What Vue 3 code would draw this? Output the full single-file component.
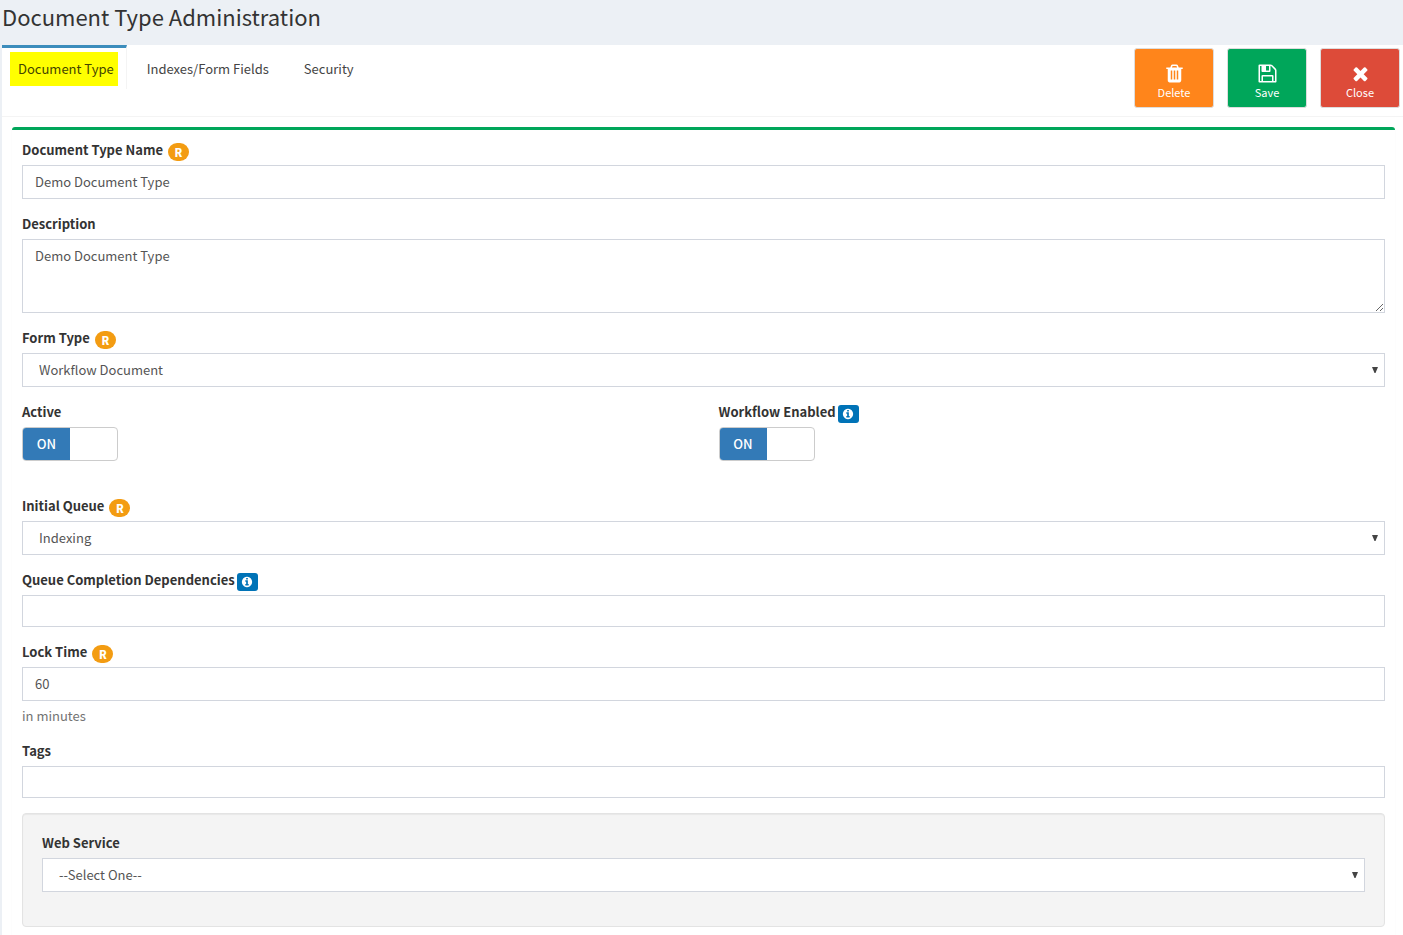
<template>
  <div class="page">
    <header class="page-header">
      <h1 class="page-title">Document Type Administration</h1>
    </header>

    <main class="panel">
      <!-- Tabs and actions -->
      <div class="toolbar">
        <nav>
          <ul class="tabs">
            <li
              v-for="tab in tabs"
              :key="tab"
              class="tab"
              :class="{ active: tab === activeTab }"
            >
              <a href="#" class="tab-link" @click.prevent="activeTab = tab">{{ tab }}</a>
            </li>
          </ul>
        </nav>
        <div class="actions">
          <button
            v-for="action in actions"
            :key="action.label"
            type="button"
            class="btn-action"
            :class="action.type"
          >
            <svg class="btn-icon" viewBox="0 0 1792 1792" aria-hidden="true">
              <path :d="action.icon" />
            </svg>
            <span>{{ action.label }}</span>
          </button>
        </div>
      </div>

      <!-- Form -->
      <form class="box" @submit.prevent>
        <div class="form-group">
          <div class="label-row">
            <label for="name">Document Type Name</label>
            <span class="badge-required">R</span>
          </div>
          <input id="name" v-model="form.name" type="text" class="form-control">
        </div>

        <div class="form-group">
          <div class="label-row">
            <label for="description">Description</label>
          </div>
          <textarea id="description" v-model="form.description" class="form-control textarea"></textarea>
        </div>

        <div class="form-group">
          <div class="label-row">
            <label for="form-type">Form Type</label>
            <span class="badge-required">R</span>
          </div>
          <div class="select-wrap">
            <select id="form-type" v-model="form.formType" class="form-control">
              <option>Workflow Document</option>
            </select>
            <svg class="select-arrow" viewBox="0 0 6 6" aria-hidden="true"><path d="M0 0h6L3.5 6h-1z" /></svg>
          </div>
        </div>

        <div class="form-row">
          <div>
            <div class="label-row">
              <label for="active">Active</label>
            </div>
            <div class="toggle">
              <input id="active" v-model="form.active" type="checkbox" class="toggle-input">
              <span class="toggle-state">{{ form.active ? 'ON' : '' }}</span>
            </div>
          </div>
          <div>
            <div class="label-row">
              <label for="workflow">Workflow Enabled</label>
              <span class="badge-info">
                <svg class="info-icon" viewBox="0 0 1792 1792" aria-hidden="true"><path :d="infoIcon" /></svg>
              </span>
            </div>
            <div class="toggle">
              <input id="workflow" v-model="form.workflow" type="checkbox" class="toggle-input">
              <span class="toggle-state">{{ form.workflow ? 'ON' : '' }}</span>
            </div>
          </div>
        </div>

        <div class="form-group">
          <div class="label-row">
            <label for="queue">Initial Queue</label>
            <span class="badge-required">R</span>
          </div>
          <div class="select-wrap">
            <select id="queue" v-model="form.queue" class="form-control">
              <option>Indexing</option>
            </select>
            <svg class="select-arrow" viewBox="0 0 6 6" aria-hidden="true"><path d="M0 0h6L3.5 6h-1z" /></svg>
          </div>
        </div>

        <div class="form-group">
          <div class="label-row">
            <label for="dependencies">Queue Completion Dependencies</label>
            <span class="badge-info">
              <svg class="info-icon" viewBox="0 0 1792 1792" aria-hidden="true"><path :d="infoIcon" /></svg>
            </span>
          </div>
          <input id="dependencies" v-model="form.dependencies" type="text" class="form-control multi">
        </div>

        <div class="form-group">
          <div class="label-row">
            <label for="lock-time">Lock Time</label>
            <span class="badge-required">R</span>
          </div>
          <input id="lock-time" v-model="form.lockTime" type="text" class="form-control">
          <p class="help-block">in minutes</p>
        </div>

        <div class="form-group">
          <div class="label-row">
            <label for="tags">Tags</label>
          </div>
          <input id="tags" v-model="form.tags" type="text" class="form-control multi">
        </div>

        <div class="well">
          <div class="form-group">
            <div class="label-row">
              <label for="service">Web Service</label>
            </div>
            <div class="select-wrap">
              <select id="service" v-model="form.service" class="form-control">
                <option value="">--Select One--</option>
              </select>
              <svg class="select-arrow" viewBox="0 0 6 6" aria-hidden="true"><path d="M0 0h6L3.5 6h-1z" /></svg>
            </div>
          </div>
        </div>
      </form>
    </main>
  </div>
</template>

<script setup>
import { ref } from 'vue'

const tabs = ['Document Type', 'Indexes/Form Fields', 'Security']
const activeTab = ref('Document Type')

const form = ref({
  name: 'Demo Document Type',
  description: 'Demo Document Type',
  formType: 'Workflow Document',
  active: true,
  workflow: true,
  queue: 'Indexing',
  dependencies: '',
  lockTime: '60',
  tags: '',
  service: ''
})

const actions = [
  {
    label: 'Delete',
    type: 'delete',
    icon: 'M704 1376v-704q0-14-9-23t-23-9h-64q-14 0-23 9t-9 23v704q0 14 9 23t23 9h64q14 0 23-9t9-23zm256 0v-704q0-14-9-23t-23-9h-64q-14 0-23 9t-9 23v704q0 14 9 23t23 9h64q14 0 23-9t9-23zm256 0v-704q0-14-9-23t-23-9h-64q-14 0-23 9t-9 23v704q0 14 9 23t23 9h64q14 0 23-9t9-23zm-544-992h448l-48-117q-7-9-17-11h-317q-10 2-17 11zm928 32v64q0 14-9 23t-23 9h-96v948q0 83-47 143.5t-113 60.5h-832q-66 0-113-58.5t-47-141.5v-952h-96q-14 0-23-9t-9-23v-64q0-14 9-23t23-9h309l70-167q15-37 54-63t79-26h320q40 0 79 26t54 63l70 167h309q14 0 23 9t9 23z'
  },
  {
    label: 'Save',
    type: 'save',
    icon: 'M512 1536h768v-384h-768v384zm896 0h128v-896q0-14-10-38.5t-20-34.5l-281-281q-10-10-34-20t-39-10v416q0 40-28 68t-68 28h-576q-40 0-68-28t-28-68v-416h-128v1280h128v-416q0-40 28-68t68-28h832q40 0 68 28t28 68v416zm-384-928v-320q0-13-9.5-22.5t-22.5-9.5h-192q-13 0-22.5 9.5t-9.5 22.5v320q0 13 9.5 22.5t22.5 9.5h192q13 0 22.5-9.5t9.5-22.5zm640 32v928q0 40-28 68t-68 28h-1344q-40 0-68-28t-28-68v-1344q0-40 28-68t68-28h928q40 0 88 20t76 48l280 280q28 28 48 76t20 88z'
  },
  {
    label: 'Close',
    type: 'close',
    icon: 'M1490 1322q0 40-28 68l-136 136q-28 28-68 28t-68-28l-294-294-294 294q-28 28-68 28t-68-28l-136-136q-28-28-28-68t28-68l294-294-294-294q-28-28-28-68t28-68l136-136q28-28 68-28t68 28l294 294 294-294q28-28 68-28t68 28l136 136q28 28 28 68t-28 68l-294 294 294 294q28 28 28 68z'
  }
]

const infoIcon = 'M1152 1376v-160q0-14-9-23t-23-9h-96v-512q0-14-9-23t-23-9h-320q-14 0-23 9t-9 23v160q0 14 9 23t23 9h96v320h-96q-14 0-23 9t-9 23v160q0 14 9 23t23 9h448q14 0 23-9t9-23zm-128-896v-160q0-14-9-23t-23-9h-192q-14 0-23 9t-9 23v160q0 14 9 23t23 9h192q14 0 23-9t9-23zm640 416q0 209-103 385.5t-279.5 279.5-385.5 103-385.5-103-279.5-279.5-103-385.5 103-385.5 279.5-279.5 385.5-103 385.5 103 279.5 279.5 103 385.5z'
</script>

<style>
body {
  margin: 0;
  background: #ecf0f5;
}
</style>

<style scoped>
.page,
.page * {
  box-sizing: border-box;
}

.page {
  display: flex;
  flex-direction: column;
  min-height: 100vh;
  padding-left: 2px;
  background: #ecf0f5;
  color: #333;
  font-family: "Noto Sans CJK SC", "Open Sans", sans-serif;
  font-size: 13px;
  line-height: 20px;
}

.page-header {
  height: 45px;
  padding-top: 2px;
}

.page-title {
  margin: 0;
  font-size: 22px;
  font-weight: 400;
  line-height: 28px;
}

.panel {
  flex: 1;
  display: flex;
  flex-direction: column;
  background: #fff;
}

/* Tabs */
.toolbar {
  display: flex;
  justify-content: space-between;
  align-items: flex-start;
  height: 72px;
  border-bottom: 1px solid #f4f4f4;
}

.tabs {
  display: flex;
  gap: 5px;
  margin: 0;
  padding: 0;
  list-style: none;
}

.tab {
  height: 44px;
  border-top: 3px solid transparent;
}

.tab-link {
  display: block;
  padding: 11px 15px 10px;
  color: #444;
  text-decoration: none;
}

.tab.active {
  border-top-color: #3c8dbc;
  border-right: 1px solid #f4f4f4;
}

.tab.active .tab-link {
  margin: 4px 8px 3px;
  padding: 7px 4px 7px 8px;
  background: #ff0;
  color: #444400;
}

/* Action buttons */
.actions {
  display: flex;
  gap: 13px;
  padding: 3px 3px 0 0;
}

.btn-action {
  display: flex;
  flex-direction: column;
  align-items: center;
  width: 80px;
  height: 60px;
  padding: 14px 0 0;
  border: 1px solid #ddd;
  border-radius: 3px;
  color: #fff;
  font-family: inherit;
  font-size: 11px;
  line-height: 16px;
  cursor: pointer;
}

.btn-action.delete {
  background: #ff851b;
}

.btn-action.save {
  background: #00a65a;
}

.btn-action.close {
  background: #dd4b39;
}

.btn-icon {
  width: 21px;
  height: 21px;
  fill: #fff;
}

/* Form box */
.box {
  flex: 1;
  margin: 10px 8px 0 10px;
  padding: 10px 10px 8px;
  border-top: 3px solid #00a65a;
  border-radius: 3px 3px 0 0;
  box-shadow: 0 1px 1px rgba(0, 0, 0, 0.1);
}

.form-group {
  margin-bottom: 15px;
}

.form-row {
  display: grid;
  grid-template-columns: 1fr 1fr;
  gap: 30px;
  margin-bottom: 35px;
}

.label-row {
  display: flex;
  align-items: flex-start;
  height: 20px;
  margin-bottom: 5px;
}

.label-row label {
  font-weight: 700;
}

.badge-required,
.badge-info {
  display: flex;
  align-items: center;
  justify-content: center;
  width: 21px;
  height: 18px;
  margin-top: 3px;
  color: #fff;
}

.badge-required {
  margin-left: 5px;
  border-radius: 9px;
  background: #f39c12;
  font-size: 11px;
  font-weight: 900;
  line-height: 18px;
}

.badge-info {
  margin-left: 2px;
  border-radius: 3px;
  background: #0073b7;
}

.info-icon {
  width: 12px;
  height: 12px;
  fill: #fff;
}

.form-control {
  display: block;
  width: 100%;
  height: 34px;
  padding: 6px 12px;
  border: 1px solid #d2d6de;
  border-radius: 0;
  outline: none;
  background: #fff;
  color: #555;
  font-family: inherit;
  font-size: 13px;
  line-height: 20px;
}

input.form-control {
  padding: 5px 12px 7px;
}

.form-control:focus {
  border-color: #3c8dbc;
}

.textarea {
  height: 74px;
  resize: vertical;
}

.multi {
  height: 32px;
}

.select-wrap {
  position: relative;
}

.select-wrap select {
  padding-left: 16px;
  appearance: none;
}

.select-arrow {
  position: absolute;
  top: 14px;
  right: 7px;
  width: 6px;
  height: 6px;
  fill: #444;
  pointer-events: none;
}

/* On/off switch */
.toggle {
  position: relative;
  width: 96px;
  height: 34px;
  overflow: hidden;
  border: 1px solid #ccc;
  border-radius: 4px;
  background: #fff;
}

.toggle-input {
  position: absolute;
  inset: 0;
  width: 100%;
  height: 100%;
  margin: 0;
  opacity: 0;
  cursor: pointer;
}

.toggle-state {
  display: block;
  width: 47px;
  height: 32px;
  color: #fff;
  font-weight: 500;
  line-height: 32px;
  text-align: center;
}

.toggle-input:checked + .toggle-state {
  background: #337ab7;
}

.help-block {
  margin: 5px 0 0;
  color: #737373;
}

.well {
  padding: 19px;
  border: 1px solid #e3e3e3;
  border-radius: 4px;
  background: #f4f4f4;
  box-shadow: inset 0 1px 1px rgba(0, 0, 0, 0.05);
}
</style>
